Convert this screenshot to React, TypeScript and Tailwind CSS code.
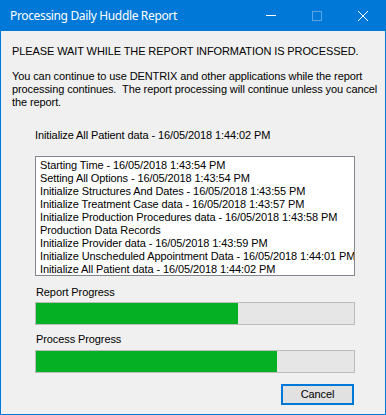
import React from 'react'

const logLines = [
  'Starting Time - 16/05/2018 1:43:54 PM',
  'Setting All Options - 16/05/2018 1:43:54 PM',
  'Initialize Structures And Dates - 16/05/2018 1:43:55 PM',
  'Initialize Treatment Case data - 16/05/2018 1:43:57 PM',
  'Initialize Production Procedures data - 16/05/2018 1:43:58 PM',
  'Production Data Records',
  'Initialize Provider data - 16/05/2018 1:43:59 PM',
  'Initialize Unscheduled Appointment Data - 16/05/2018 1:44:01 PM',
  'Initialize All Patient data - 16/05/2018 1:44:02 PM',
]

function ProgressBar({ fill }: { fill: number }) {
  return (
    <div className="w-[320px] h-[23px] border border-[#bcbcbc] bg-[#e6e6e6] flex">
      <div className="h-full bg-[#06b025]" style={{ width: fill }} />
    </div>
  )
}

export default function App() {
  return (
    <div className="w-[386px] h-[415px] bg-[#f0f0f0] border border-t-0 border-[#0078d7] flex flex-col text-[11px] leading-[13px] tracking-[-0.1px] text-black font-['Liberation_Sans',Arial,sans-serif]">
      {/* Title bar */}
      <div className="h-[31px] -mx-px bg-[#0078d7] flex items-center text-white shrink-0 tracking-normal">
        <span className="pl-[10px] flex-1 text-[12px] tracking-[-0.35px] font-['Noto_Sans',sans-serif]">Processing Daily Huddle Report</span>
        <div className="w-[46px] h-full flex items-center justify-center">
          <div className="w-[10px] h-px bg-white" />
        </div>
        <div className="w-[46px] h-full flex items-center justify-center">
          <div className="w-[10px] h-[10px] border border-[#5aa5e6]" />
        </div>
        <div className="w-[46px] h-full flex items-center justify-center">
          <svg width="10" height="10" viewBox="0 0 10 10" fill="none" stroke="white" strokeWidth="1">
            <path d="M0 0 L10 10 M10 0 L0 10" />
          </svg>
        </div>
      </div>

      {/* Body */}
      <div className="flex flex-col pl-[11px] pt-[14px]">
        <p>PLEASE WAIT WHILE THE REPORT INFORMATION IS PROCESSED.</p>
        <p className="mt-[12px] w-[372px]">
          You can continue to use DENTRIX and other applications while the report processing continues.&nbsp; The report processing will continue unless you cancel the report.
        </p>

        <div className="pl-[23px] flex flex-col">
          <p className="mt-[20px]">Initialize All Patient data - 16/05/2018 1:44:02 PM</p>

          <div className="mt-[14px] w-[320px] h-[120px] bg-white border border-[#828790] pl-[4px] pt-[2px] overflow-hidden">
            {logLines.map((l) => (
              <div key={l} className="whitespace-nowrap">{l}</div>
            ))}
          </div>

          <p className="mt-[10px] pl-[1px]">Report Progress</p>
          <div className="mt-[3px]">
            <ProgressBar fill={202} />
          </div>

          <p className="mt-[8px] pl-[1px]">Process Progress</p>
          <div className="mt-[4px]">
            <ProgressBar fill={241} />
          </div>

          <div className="mt-[11px] w-[320px] flex justify-end">
            <button className="w-[73px] h-[21px] border-2 border-[#0078d7] bg-[#e1e1e1] text-[11px] leading-none mr-px">
              Cancel
            </button>
          </div>
        </div>
      </div>
    </div>
  )
}
